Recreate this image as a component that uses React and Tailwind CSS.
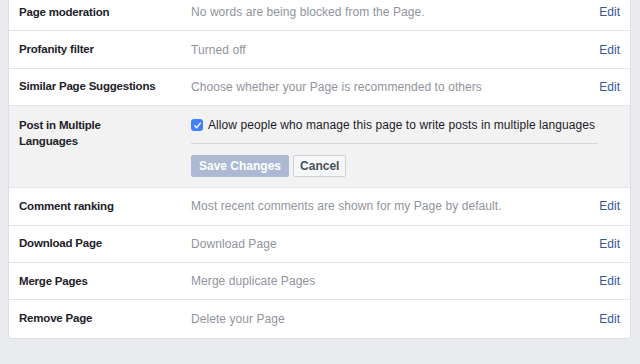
import React from "react";

const font = { fontFamily: '"Liberation Sans", Arial, sans-serif' };

function Row({ label, value, last }) {
  return (
    <div
      className={`flex items-center h-[37.4px] px-[10px] ${last ? "" : "border-b border-[#e5e5e5]"}`}
    >
      <div className="w-[172px] shrink-0 text-[11.5px] tracking-[-0.2px] font-bold text-[#1d2129]">{label}</div>
      <div className="flex-1 text-[12px] tracking-[0.07px] text-[#90949c]">{value}</div>
      <a className="text-[12px] text-[#365899] cursor-pointer">Edit</a>
    </div>
  );
}

export default function App() {
  return (
    <div className="w-[640px] h-[364px] overflow-hidden bg-[#e9ebee]" style={font}>
      <div className="ml-[8px] w-[623px] -mt-[7px] bg-white border border-[#dddfe2] rounded-[3px]">
        <Row label="Page moderation" value="No words are being blocked from the Page." />
        <Row label="Profanity filter" value="Turned off" />
        <Row label="Similar Page Suggestions" value="Choose whether your Page is recommended to others" />
        <div className="flex items-start h-[82px] px-[10px] pt-[11px] bg-[#f2f2f2] border-b border-[#e5e5e5]">
          <div className="w-[172px] shrink-0 pr-[32px] text-[11.5px] tracking-[-0.2px] leading-[16px] font-bold text-[#1d2129]">
            Post in Multiple Languages
          </div>
          <div className="w-[407px]">
            <label className="flex items-center h-[16px] gap-[5px] text-[12px] tracking-[0.07px] text-[#1d2129]">
              <span className="w-[12px] h-[12px] rounded-[3px] bg-[#4080ff] flex items-center justify-center">
                <svg width="9" height="9" viewBox="0 0 10 10">
                  <path d="M2 5.2 L4.2 7.4 L8.2 2.4" fill="none" stroke="white" strokeWidth="1.6" strokeLinecap="round" strokeLinejoin="round" />
                </svg>
              </span>
              Allow people who manage this page to write posts in multiple languages
            </label>
            <div className="mt-[10px] h-px bg-[#d3d6db]" />
            <div className="mt-[11px] flex gap-[4px]">
              <button className="h-[22px] px-[7px] bg-[#adb9d3] border border-[#adb9d3] text-white text-[12px] font-bold rounded-[2px]">
                Save Changes
              </button>
              <button className="h-[22px] px-[6px] bg-[#f6f7f9] border border-[#ced0d4] text-[#4b4f56] text-[12px] font-bold rounded-[2px]">
                Cancel
              </button>
            </div>
          </div>
        </div>
        <Row label="Comment ranking" value="Most recent comments are shown for my Page by default." />
        <Row label="Download Page" value="Download Page" />
        <Row label="Merge Pages" value="Merge duplicate Pages" />
        <Row label="Remove Page" value="Delete your Page" last />
      </div>
    </div>
  );
}
